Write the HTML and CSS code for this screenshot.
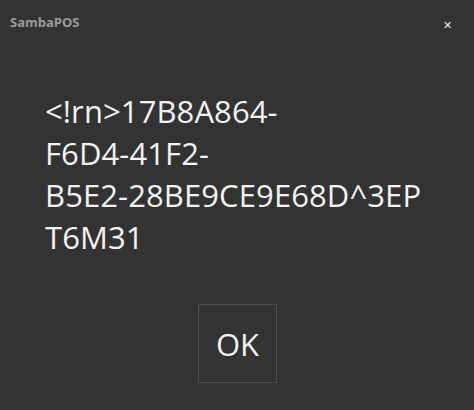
FILE: index.html
```html
<!DOCTYPE html>
<html lang="en">
<head>
    <meta charset="UTF-8">
    <meta name="viewport" content="width=device-width, initial-scale=1.0">
    <title>SambaPOS</title>
    <link rel="stylesheet" href="styles.css">
</head>
<body>
    <div class="dialog">
        <div class="title-bar">
            <span class="title">SambaPOS</span>
            <span class="close-btn">&#x2715;</span>
        </div>

        <div class="message">
            &lt;!rn&gt;17B8A864-<br>F6D4-41F2-<br>B5E2-28BE9CE9E68D^3EP<br>T6M31
        </div>

        <div class="actions">
            <button class="ok-btn">OK</button>
        </div>
    </div>
</body>
</html>
```

FILE: styles.css
```css
body {
    margin: 0;
    background-color: #333333;
    font-family: "Open Sans", "Noto Sans", Arial, sans-serif;
    color: #f2f2f2;
}

.dialog {
    display: flex;
    flex-direction: column;
    height: 410px;
}

.title-bar {
    display: flex;
    justify-content: space-between;
    align-items: center;
    height: 46px;
    padding: 0 22px 0 10px;
}

.title {
    font-size: 13px;
    font-weight: bold;
    color: #9a9a9a;
    margin-top: -2px;
}

.close-btn {
    font-size: 11px;
    color: #e8e8e8;
    margin-top: 2px;
}

.message {
    padding: 44px 0 0 45px;
    font-size: 31px;
    line-height: 42px;
    letter-spacing: 0.1px;
}

.actions {
    display: flex;
    justify-content: center;
    padding-top: 46px;
}

.ok-btn {
    width: 79px;
    height: 79px;
    margin-left: 1px;
    background: transparent;
    border: 1px solid #4e4e4e;
    color: #f2f2f2;
    font-family: inherit;
    font-size: 31px;
    padding: 0;
}
```
